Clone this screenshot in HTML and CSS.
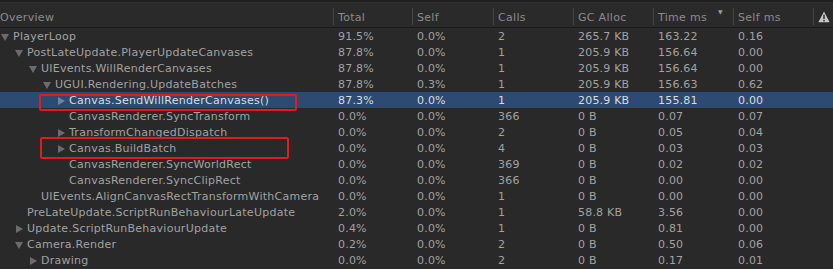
FILE: index.html
```html
<!DOCTYPE html>
<html>
<head>
<meta charset="utf-8">
<link rel="stylesheet" href="styles.css">
</head>
<body>
<div class="panel">
  <div class="topband"></div>
  <div class="header">
    <div class="hc c-name">Overview</div>
    <div class="hc c-num sep">Total</div>
    <div class="hc c-num sep">Self</div>
    <div class="hc c-num sep">Calls</div>
    <div class="hc c-num sep">GC Alloc</div>
    <div class="hc c-num sep sorted">Time ms<span class="sortarrow">▼</span></div>
    <div class="hc c-num sep">Self ms</div>
    <div class="hc c-warn sep">
      <svg width="12" height="12" viewBox="0 0 12 12"><path d="M6 0.5 L11.6 11.2 L0.4 11.2 Z" fill="#c8c8c8"/><rect x="5.2" y="3.6" width="1.6" height="4.6" fill="#3a3a3a"/><rect x="5.2" y="9" width="1.6" height="1.4" fill="#3a3a3a"/></svg>
    </div>
  </div>
  <div class="rows">
    <div class="row"><div class="c-name l0"><span class="tri down"></span>PlayerLoop</div><div class="c-num">91.5%</div><div class="c-num">0.0%</div><div class="c-num">2</div><div class="c-num">265.7 KB</div><div class="c-num">163.22</div><div class="c-num">0.16</div></div>
    <div class="row"><div class="c-name l1"><span class="tri down"></span>PostLateUpdate.PlayerUpdateCanvases</div><div class="c-num">87.8%</div><div class="c-num">0.0%</div><div class="c-num">1</div><div class="c-num">205.9 KB</div><div class="c-num">156.64</div><div class="c-num">0.00</div></div>
    <div class="row"><div class="c-name l2"><span class="tri down"></span>UIEvents.WillRenderCanvases</div><div class="c-num">87.8%</div><div class="c-num">0.0%</div><div class="c-num">1</div><div class="c-num">205.9 KB</div><div class="c-num">156.64</div><div class="c-num">0.00</div></div>
    <div class="row"><div class="c-name l3"><span class="tri down"></span>UGUI.Rendering.UpdateBatches</div><div class="c-num">87.8%</div><div class="c-num">0.3%</div><div class="c-num">1</div><div class="c-num">205.9 KB</div><div class="c-num">156.63</div><div class="c-num">0.62</div></div>
    <div class="row selected"><div class="c-name l4"><span class="tri right"></span>Canvas.SendWillRenderCanvases()<span class="mark mark1"></span></div><div class="c-num">87.3%</div><div class="c-num">0.0%</div><div class="c-num">1</div><div class="c-num">205.9 KB</div><div class="c-num">155.81</div><div class="c-num">0.00</div></div>
    <div class="row"><div class="c-name l4"><span class="tri none"></span>CanvasRenderer.SyncTransform</div><div class="c-num">0.0%</div><div class="c-num">0.0%</div><div class="c-num">366</div><div class="c-num">0 B</div><div class="c-num">0.07</div><div class="c-num">0.07</div></div>
    <div class="row"><div class="c-name l4"><span class="tri right"></span>TransformChangedDispatch</div><div class="c-num">0.0%</div><div class="c-num">0.0%</div><div class="c-num">2</div><div class="c-num">0 B</div><div class="c-num">0.05</div><div class="c-num">0.04</div></div>
    <div class="row"><div class="c-name l4"><span class="tri right"></span>Canvas.BuildBatch<span class="mark mark2"></span></div><div class="c-num">0.0%</div><div class="c-num">0.0%</div><div class="c-num">4</div><div class="c-num">0 B</div><div class="c-num">0.03</div><div class="c-num">0.03</div></div>
    <div class="row"><div class="c-name l4"><span class="tri none"></span>CanvasRenderer.SyncWorldRect</div><div class="c-num">0.0%</div><div class="c-num">0.0%</div><div class="c-num">369</div><div class="c-num">0 B</div><div class="c-num">0.02</div><div class="c-num">0.02</div></div>
    <div class="row"><div class="c-name l4"><span class="tri none"></span>CanvasRenderer.SyncClipRect</div><div class="c-num">0.0%</div><div class="c-num">0.0%</div><div class="c-num">366</div><div class="c-num">0 B</div><div class="c-num">0.00</div><div class="c-num">0.00</div></div>
    <div class="row"><div class="c-name l2"><span class="tri none"></span>UIEvents.AlignCanvasRectTransformWithCamera</div><div class="c-num">0.0%</div><div class="c-num">0.0%</div><div class="c-num">1</div><div class="c-num">0 B</div><div class="c-num">0.00</div><div class="c-num">0.00</div></div>
    <div class="row"><div class="c-name l1"><span class="tri none"></span>PreLateUpdate.ScriptRunBehaviourLateUpdate</div><div class="c-num">2.0%</div><div class="c-num">0.0%</div><div class="c-num">1</div><div class="c-num">58.8 KB</div><div class="c-num">3.56</div><div class="c-num">0.00</div></div>
    <div class="row"><div class="c-name l1"><span class="tri right"></span>Update.ScriptRunBehaviourUpdate</div><div class="c-num">0.4%</div><div class="c-num">0.0%</div><div class="c-num">1</div><div class="c-num">0 B</div><div class="c-num">0.81</div><div class="c-num">0.00</div></div>
    <div class="row"><div class="c-name l1"><span class="tri down"></span>Camera.Render</div><div class="c-num">0.2%</div><div class="c-num">0.0%</div><div class="c-num">2</div><div class="c-num">0 B</div><div class="c-num">0.50</div><div class="c-num">0.06</div></div>
    <div class="row"><div class="c-name l2"><span class="tri right"></span>Drawing</div><div class="c-num">0.0%</div><div class="c-num">0.0%</div><div class="c-num">2</div><div class="c-num">0 B</div><div class="c-num">0.17</div><div class="c-num">0.01</div></div>
  </div>
</div>
</body>
</html>
```

FILE: styles.css
```css
html, body {
  margin: 0;
  padding: 0;
  background: #292929;
}
.panel {
  width: 833px;
  height: 269px;
  overflow: hidden;
  font-family: "DejaVu Sans", sans-serif;
  font-size: 11px;
  color: #a2a2a2;
}
.topband {
  height: 2px;
  background: #1f1f1f;
  border-bottom: 1px solid #303030;
}
.header {
  display: flex;
  height: 24px;
  background: #2a2a2a;
  border-bottom: 1px solid #1a1a1a;
  color: #8a8a8a;
  font-size: 11px;
  letter-spacing: 0.3px;
}
.hc {
  display: flex;
  align-items: center;
  position: relative;
  box-sizing: border-box;
  padding-top: 4px;
}
.hc.sep::before {
  content: "";
  position: absolute;
  left: 0;
  top: 5px;
  height: 17px;
  width: 1px;
  background: #454545;
}
.c-name {
  width: 333px;
  box-sizing: border-box;
  flex: none;
  white-space: nowrap;
  display: flex;
  align-items: center;
  position: relative;
}
.rows .c-name { letter-spacing: 0.26px; }
.c-num {
  width: 80px;
  flex: none;
  box-sizing: border-box;
  padding-left: 5px;
  white-space: nowrap;
}
.rows .c-num { letter-spacing: 0.2px; }
.header .c-num:nth-child(2) { width: 79px; }
.header .c-num:nth-child(3) { width: 81px; }
.rows .c-num:nth-child(2) { width: 79px; }
.rows .c-num:nth-child(3) { width: 81px; }
.c-warn {
  width: 20px;
  flex: none;
  justify-content: center;
  padding-left: 2px;
}
.sortarrow {
  position: absolute;
  right: 10px;
  top: 5px;
  font-size: 6px;
  color: #9a9a9a;
}
.rows {
  display: flex;
  flex-direction: column;
}
.row {
  display: flex;
  height: 16px;
  box-sizing: border-box;
  padding-top: 1px;
  line-height: 15px;
  align-items: flex-start;
}
.row > div { height: 15px; }
.row.selected {
  background: #2c4a72;
  color: #dcdcdc;
}
.l0 { padding-left: 1px; }
.l1 { padding-left: 15px; }
.l2 { padding-left: 29px; }
.l3 { padding-left: 43px; }
.l4 { padding-left: 57px; }
.tri {
  display: inline-block;
  width: 12px;
  height: 8px;
  flex: none;
  position: relative;
}
.tri.down::after {
  content: "";
  position: absolute;
  left: 0;
  top: 1px;
  border-left: 4px solid transparent;
  border-right: 4px solid transparent;
  border-top: 7px solid #6c6c6c;
}
.tri.right::after {
  content: "";
  position: absolute;
  left: 1px;
  top: 0;
  border-top: 4px solid transparent;
  border-bottom: 4px solid transparent;
  border-left: 7px solid #6c6c6c;
}
.selected .tri.right::after { border-left-color: #73839c; }
.mark {
  position: absolute;
  border: 2px solid #dc1e1e;
  border-radius: 2px;
  box-sizing: border-box;
}
.mark1 {
  left: 39px;
  top: 1px;
  width: 258px;
  height: 17px;
}
.mark2 {
  left: 40px;
  top: -4px;
  width: 249px;
  height: 22px;
}
```
